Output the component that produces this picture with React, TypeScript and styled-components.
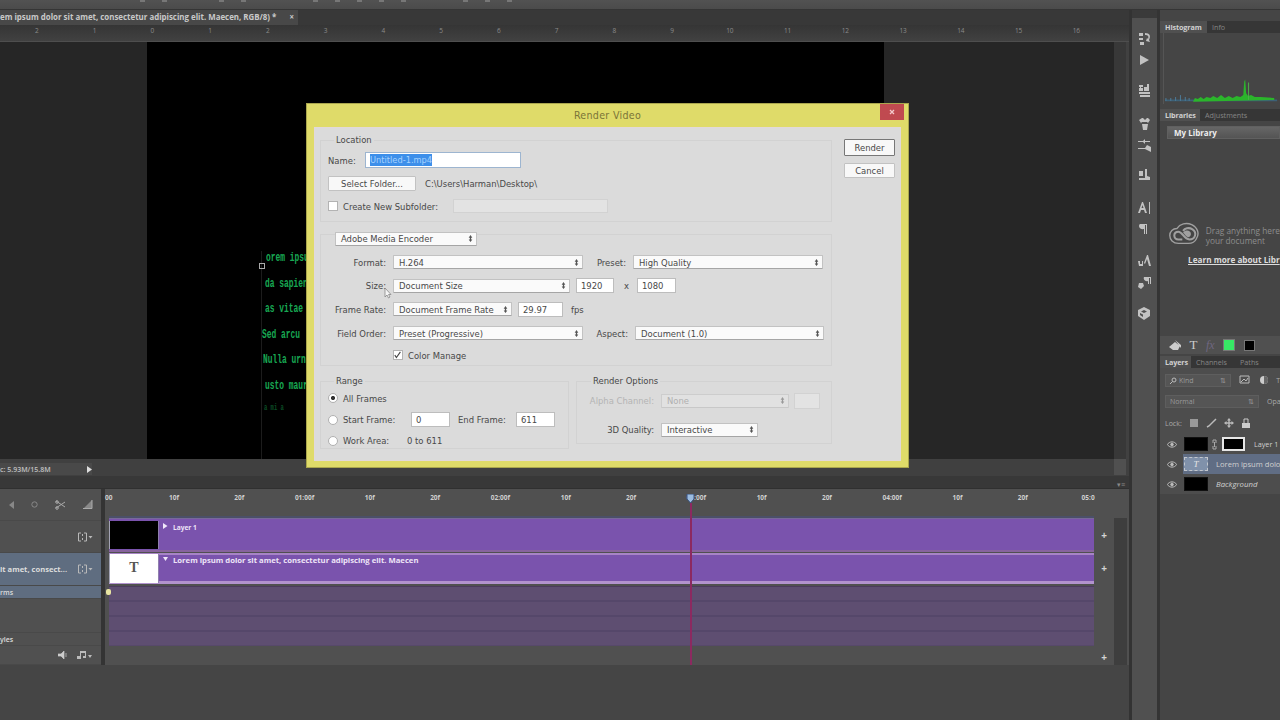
import React from 'react';
import styled, { createGlobalStyle } from 'styled-components';

const Global = createGlobalStyle`
  *{box-sizing:border-box}
  body{margin:0;background:#454545;overflow:hidden;font-family:"Open Sans","Noto Sans",sans-serif}
`;

const Screen = styled.div`
  position:relative;width:1280px;height:720px;overflow:hidden;display:flex;flex-direction:column;
  background:#454545;color:#c4c4c4;font-size:7px;
`;
const OptionsBar = styled.div`
  height:10px;flex:none;background:linear-gradient(#525252,#4b4b4b);border-bottom:1px solid #353535;
  display:flex;gap:17px;padding-left:140px;overflow:hidden;
`;
const OptionMark = styled.i<{ $gap?: number }>`
  width:5px;height:2px;background:#777;margin-left:${p => p.$gap ?? 0}px;
`;
const Body = styled.div`flex:1;display:flex;min-height:0;`;
const Main = styled.div`width:1130px;display:flex;flex-direction:column;`;
const TabRow = styled.div`height:15px;flex:none;background:#383838;display:flex;`;
const DocTab = styled.div`
  width:298px;height:15px;background:#484848;display:flex;align-items:center;overflow:hidden;
  color:#c8c8c8;font-size:7.9px;font-weight:700;white-space:nowrap;justify-content:space-between;padding-right:4px;line-height:15px;
`;
const Ruler = styled.div`
  height:17px;flex:none;background:linear-gradient(#353535,#414141);border-bottom:1px solid #4e4e4e;display:flex;
  padding-left:8px;overflow:hidden;
`;
const RulerMark = styled.span`
  width:57.75px;flex:none;text-align:center;color:#8b8b8b;font-size:6.5px;line-height:12px;
`;
const Workspace = styled.div`height:417px;flex:none;display:flex;background:#262626;padding-left:147px;`;
const Artboard = styled.div`width:737px;height:417px;background:#000;padding:209px 0 0 114px;`;
const TextLayer = styled.div`
  width:200px;height:208px;border-left:1px solid #1c1c1c;position:relative;
  font-family:"Liberation Mono",monospace;font-size:13px;color:#18a853;font-weight:bold;
`;
const Handle = styled.i`position:absolute;left:-3px;top:12px;width:6px;height:6px;border:1px solid #aaa;`;
const GreenLine = styled.div<{ $x: number; $cut?: boolean }>`
  height:${p => (p.$cut ? 10 : 25.6)}px;line-height:14px;margin-left:${p => p.$x}px;white-space:nowrap;
  transform:scaleX(.61);transform-origin:left;
  ${p => p.$cut && 'opacity:.45;font-size:9px;line-height:7px;'}
`;
const ScrollTrack = styled.div`margin-left:auto;width:16px;background:#383838;border-right:4px solid #414141;`;
const StatusBar = styled.div`
  height:17px;flex:none;background:#404040;display:flex;align-items:center;padding-bottom:1px;color:#c0c0c0;font-weight:600;
  justify-content:space-between;
`;
const StatusInfo = styled.div`width:92px;display:flex;justify-content:space-between;align-items:center;height:12px;background:#494949;margin-top:4px;`;
const Corner = styled.div`width:16px;height:16px;background:#505050;border-right:4px solid #404040;`;
const TimelineTabs = styled.div`height:13px;flex:none;background:#383838;border-bottom:1px solid #303030;display:flex;justify-content:flex-end;align-items:center;padding:4px 5px 0 0;color:#888;`;
const Timeline = styled.div`height:176px;flex:none;display:flex;background:#505050;`;
const TrackHeads = styled.div`width:101px;display:flex;flex-direction:column;color:#ddd;font-weight:600;`;
const Head = styled.div<{ $h: number; $on?: boolean; $end?: boolean; $gap?: number }>`
  height:${p => p.$h}px;flex:none;display:flex;align-items:center;white-space:nowrap;overflow:hidden;
  background:${p => (p.$on ? '#5f6d80' : '#505050')};border-bottom:1px solid #494949;
  justify-content:${p => (p.$end ? 'flex-end' : 'space-between')};gap:${p => p.$gap ?? 0}px;padding-right:8px;
`;
const HeadText = styled.span`font-size:7.6px;font-weight:700;`;
const Tracks = styled.div`
  width:993px;position:relative;border-left:4px solid #343434;padding-left:4px;display:flex;flex-direction:column;
`;
const TimeRuler = styled.div`height:27px;margin-left:-33px;display:flex;width:1030px;`;
const TimeMark = styled.span`
  width:65.3px;flex:none;text-align:center;line-height:17px;height:27px;color:#cfcfcf;font-size:6.5px;font-weight:700;
`;
const CacheBar = styled.div`height:2px;background:#4b5068;`;
const Clip = styled.div<{ $sel?: boolean }>`
  height:${p => (p.$sel ? 31 : 34)}px;flex:none;margin-bottom:1px;display:flex;align-items:stretch;background:#7a53ad;
  border-top:${p => (p.$sel ? '2px solid #a784c6' : '1px solid #77699a')};
  border-bottom:${p => (p.$sel ? '3px solid #b293ce' : '2px solid #87639d')};color:#eee4f8;font-weight:700;line-height:9px;
`;
const Thumb = styled.div<{ $light?: boolean }>`
  width:50px;flex:none;margin:${p => (p.$light ? '-1px 0 -2px' : '2px 0 1px')};border-left:1px solid #a3a3b4;border-right:1px solid #8f7fae;
  background:${p => (p.$light ? '#fff' : '#000')};color:#555;text-align:center;font:bold 14px/28px "Liberation Serif",serif;
`;
const ClipName = styled.div<{ $wide?: boolean }>`padding:${p => (p.$wide ? 1 : 4)}px 0 0 4px;display:flex;gap:5px;height:14px;font-size:${p => (p.$wide ? 7.7 : 6.6)}px;white-space:nowrap;`;
const PropertyLanes = styled.div`
  height:60px;flex:none;margin-top:1px;
  background:repeating-linear-gradient(#5e4e71 0 13px,#55476a 13px 15px);
  border-top:1px solid #4b3b5d;border-bottom:1px solid #57496a;
`;
const Playhead = styled.div`
  position:absolute;left:581px;top:5px;width:9px;height:171px;display:flex;flex-direction:column;align-items:center;
`;
const PlayLine = styled.i`width:2px;flex:1;background:#8c2960;`;
const KeyDot = styled.i`position:absolute;left:1px;top:100px;width:5px;height:6px;border-radius:2px;background:#e9e6a2;`;
const AddColumn = styled.div`
  width:20px;height:176px;display:flex;flex-direction:column;align-items:center;color:#d4d4d4;
  font-size:10px;font-weight:bold;line-height:10px;padding-top:41px;
`;
const Add = styled.span<{ $mt?: number }>`margin-top:${p => p.$mt ?? 0}px;`;
const TimelineScroll = styled.div`width:13px;margin-top:29px;background:#3e3e3e;`;
const Gutter = styled.div`width:3px;background:#333;margin-left:-1px;`;
const IconStrip = styled.div`
  width:25px;background:#505050;display:flex;flex-direction:column;align-items:center;padding-top:13px;border-top:8px solid #3a3a3a;
`;
const StripIcon = styled.div<{ $h: number }>`
  height:${p => p.$h}px;width:16px;flex:none;display:flex;align-items:flex-start;justify-content:center;
`;
const Panels = styled.div`flex:1;min-width:0;border-left:3px solid #343434;background:#454545;padding-top:11px;display:flex;flex-direction:column;overflow:hidden;white-space:nowrap;`;
const PanelTabs = styled.div<{ $mt?: number }>`height:12px;margin-top:${p => p.$mt ?? 0}px;flex:none;background:#363636;display:flex;font-size:7.2px;align-items:stretch;line-height:12px;`;
const PanelTab = styled.span<{ $on?: boolean; $w: number }>`
  width:${p => p.$w}px;padding-left:5px;background:${p => (p.$on ? '#505050' : 'transparent')};color:${p => (p.$on ? '#d0d0d0' : '#858585')};
  font-weight:${p => (p.$on ? 700 : 400)};flex:none;${p => p.$on && 'letter-spacing:-.1px;'}
`;
const HistogramBox = styled.div`height:71px;flex:none;border-left:1px solid #555;margin-left:3px;display:flex;align-items:flex-end;overflow:hidden;`;
const LibrarySelect = styled.div`
  margin:5px 0 0 7px;height:13px;flex:none;background:linear-gradient(#666,#545454);border:1px solid #606060;color:#eee;font-size:8px;font-weight:bold;line-height:11px;padding-left:6px;
`;
const LibraryHint = styled.div`height:36px;margin-top:81px;padding-left:9px;display:flex;gap:7px;flex:none;color:#8d8d8d;font-size:8.3px;line-height:10px;`;
const HintText = styled.div`padding-top:6px;`;
const LearnMore = styled.div`margin:-2px 0 0 28px;height:15px;flex:none;font-size:8.2px;font-weight:bold;text-decoration:underline;color:#dcdcdc;`;
const SwatchRow = styled.div`height:18px;margin-top:67px;flex:none;background:#505050;display:flex;align-items:center;gap:8.500px;padding-left:9px;color:#ccc;font:13px "Liberation Serif",serif;`;
const FxMark = styled.i`color:#6f6780;font-size:12px;`;
const Swatch = styled.i<{ $c: string; $s: number }>`width:${p => p.$s}px;height:${p => p.$s}px;background:${p => p.$c};border:1px solid #777;`;
const LayerPanel = styled.div`background:#4d4d4d;height:126px;flex:none;padding-top:2px;`;
const LayerTools = styled.div<{ $h: number; $gap?: number }>`height:${p => p.$h}px;display:flex;align-items:center;gap:${p => p.$gap ?? 8}px;padding-left:5px;color:#aaa;`;
const Field = styled.div<{ $w: number }>`width:${p => p.$w}px;flex:none;height:13px;background:#555;border:1px solid #5e5e5e;line-height:11px;padding:0 4px;display:flex;justify-content:space-between;align-items:center;color:#9a9a9a;`;
const FieldText = styled.span`display:flex;gap:2px;align-items:center;`;
const Layer = styled.div<{ $on?: boolean }>`
  height:20px;display:flex;align-items:center;color:#d0d0d0;font-size:7.2px;
  background:${p => (p.$on ? 'linear-gradient(90deg,#4d4d4d 23px,#606d84 23px)' : '#4d4d4d')};
`;
const EyeCell = styled.span`width:17px;padding-left:7px;display:flex;flex:none;`;
const LayerThumb = styled.i<{ $photo?: boolean }>`
  width:24px;flex:none;height:14px;margin:0 4px 0 7px;background:${p => (p.$photo ? '#8091aa' : '#000')};border:1px ${p => (p.$photo ? 'dashed #c2c6cc' : 'solid #111')};
  color:#e7e7e7;font:italic 9px/12px "Liberation Serif",serif;text-align:center;
`;
const MaskThumb = styled.i`width:23px;flex:none;height:14px;background:#000;border:2px solid #e6e6e6;margin:0 9px 0 5px;`;
const LayerName = styled.span`padding-left:4px;font-size:7.6px;`;
const BackgroundName = styled.i`padding-left:4px;font-size:7.8px;`;

const Dialog = styled.div`
  position:absolute;left:306px;top:103px;width:603px;height:365px;background:#dfdb69;border:1px solid #aaa64e;padding:0 7px 6px;
  font-family:"DejaVu Sans Condensed","DejaVu Sans",sans-serif;font-size:9.4px;color:#484848;
`;
const TitleBar = styled.div`height:23px;text-align:center;line-height:22px;font-size:10.6px;letter-spacing:.3px;color:#7a7538;`;
const CloseButton = styled.div`
  position:absolute;right:4px;top:0;width:24px;height:16px;background:#c04a50;display:flex;align-items:center;justify-content:center;
`;
const DialogBody = styled.div`height:334px;background:#dbdbdb;display:flex;border:1px solid #e2d9d9;padding-left:5px;`;
const Form = styled.div`width:512px;padding-top:6px;flex:none;`;
const Group = styled.fieldset<{ $h: number; $w?: number; $mt?: number }>`
  margin:${p => p.$mt ?? 0}px 0 0;padding:0;min-width:0;height:${p => p.$h}px;width:${p => p.$w ?? 512}px;border:1px solid #d2d2d2;
`;
const Legend = styled.legend<{ $ml?: number }>`margin-left:${p => p.$ml ?? 13}px;padding:0 2px;height:12px;line-height:12px;`;
const Row = styled.div<{ $h: number; $pl?: number; $mt?: number }>`
  height:${p => p.$h}px;padding-left:${p => p.$pl ?? 7}px;margin-top:${p => p.$mt ?? 0}px;display:flex;align-items:center;white-space:nowrap;line-height:11px;
`;
const Label = styled.span<{ $w: number; $right?: boolean; $off?: boolean }>`
  width:${p => p.$w}px;flex:none;${p => p.$right && 'text-align:right;padding-right:7px;'}${p => p.$off && 'color:#b4b4b4;'}
`;
const Input = styled.div<{ $w: number; $h?: number; $off?: boolean; $mr?: number; $focus?: boolean }>`
  width:${p => p.$w}px;height:${p => p.$h ?? 16}px;flex:none;margin-right:${p => p.$mr ?? 0}px;padding:0 4px;display:flex;align-items:center;
  background:${p => (p.$off ? '#e3e3e3' : '#fff')};border:1px solid ${p => (p.$off ? '#d2d2d2' : p.$focus ? '#9db5d0' : '#bdbdbd')};
`;
const Selected = styled.span`background:#3d8fea;color:#a5d2ff;line-height:12px;height:12px;white-space:nowrap;font-size:9.2px;`;
const Button = styled.div<{ $w: number; $primary?: boolean; $mr?: number }>`
  width:${p => p.$w}px;height:${p => (p.$primary ? 17 : 15)}px;flex:none;margin-right:${p => p.$mr ?? 0}px;background:#f8f8f8;
  border:1px solid ${p => (p.$primary ? '#777' : '#c2c2c2')};border-radius:1px;display:flex;align-items:center;justify-content:center;
`;
const SelectBox = styled.div<{ $w: number; $mr?: number; $off?: boolean }>`
  width:${p => p.$w}px;height:14px;flex:none;margin-right:${p => p.$mr ?? 0}px;padding:0 3px 0 5px;display:flex;justify-content:space-between;align-items:center;
  background:${p => (p.$off ? '#e1e1e1' : '#fafafa')};color:${p => (p.$off ? '#b0b0b0' : 'inherit')};
  border:1px solid ${p => (p.$off ? '#cdcdcd' : '#c2c2c2')};border-bottom-color:${p => (p.$off ? '#c8c8c8' : '#a5a5a5')};border-radius:1px;
`;
const Check = styled.span`width:10px;height:10px;flex:none;background:#fff;border:1px solid #b3b3b3;margin-right:5px;display:flex;`;
const Radio = styled.span<{ $on?: boolean }>`
  width:10px;height:10px;flex:none;border-radius:5px;border:1px solid #b0b0b0;margin-right:5px;
  background:${p => (p.$on ? 'radial-gradient(circle,#333 0 1.7px,#fff 2.4px)' : '#fff')};
`;
const Columns = styled.div`display:flex;gap:7px;margin-top:9px;`;
const Actions = styled.div`margin-left:12px;padding-top:11px;display:flex;flex-direction:column;gap:7px;`;
const Cursor = styled.svg`position:absolute;left:384px;top:287px;`;

function Select({ w, mr, off, children }: { w: number; mr?: number; off?: boolean; children: React.ReactNode }) {
  return (
    <SelectBox $w={w} $mr={mr} $off={off}>
      <span>{children}</span>
      <svg width="5" height="7" viewBox="0 0 5 8" fill={off ? '#999' : '#555'}><path d="M2.5 0 4.600 3H3.200v2h1.400L2.500 8 .4 5h1.400V3H.4Z" /></svg>
    </SelectBox>
  );
}

const stripIcons: [number, React.ReactNode][] = [
  [21, <path key="a" d="M2 2h4v3H2zM2 7h4v2H2zM3 11h4v3H3zM8 2c5 0 6 3 4 7l1 2-4-1 1-3 1 1c1-3 0-4-3-4z" />],
  [31, <path key="b" d="M3 3l9 5-9 5z" />],
  [33, <path key="c" d="M2 2h4v2H4v1h2v3H2V5h1V4H2zM7 4h3V1h2v7H7zM2 9h11v2H2zM3 12h10v2H3z" />],
  [22, <path key="d" d="M2 4l3-2h1l2 2 2-2h1l2 2-2 3-1-1-5 0-1 1zM5 8h6l-1 6H6z" />],
  [30, <path key="e" d="M1 3h5l2-2v2h5v1H8v2L6 4H1zM1 10h7l2-3 4 2v5l-4-2-2-1H1z" />],
  [32, <path key="f" d="M2 3h4v5H2zM8 1h2v7l3 1v3H2v-2h6z" />],
  [21, <path key="g" d="M5 2h1l4 11H8L7 10H4l-1 3H1zM5.500 5L4.500 8h2zM12 2h1v12h-1z" />],
  [32, <path key="h" d="M3 3h7v10H9V4H8v9H7V8C2 9 1 4 3 3z" />],
  [22, <path key="i" d="M1 8h2v3h2V8h1v5H2zM7 10l3-8h1l3 11h-2l-2-7-2 5z" />],
  [31, <path key="j" d="M7 2h7v7h-1V3h-1v6h-1V6C8 7 6 4 7 2zM2 8h4l1 3-3 3-3-2z" />],
  [30, <path key="k" d="M7 1l6 3v6l-6 4-6-4V4zm0 3L4 5.500 7 7l3-1.500zM3 7v2l3 2V8.500z" />],
];

const times = ['00', '10f', '20f', '01:00f', '10f', '20f', '02:00f', '10f', '20f', '03:00f', '10f', '20f', '04:00f', '10f', '20f', '05:0'];
const lines: [string, number][] = [['orem ipsum', 4], ['da sapien', 3], ['as vitae', 3], ['Sed arcu', 0], ['Nulla urna', 1], ['usto mauris', 3]];

const Eye = () => (
  <svg width="10" height="9" viewBox="0 0 10 9" fill="none" stroke="#bcbcbc"><path d="M.5 4.500C2 1 8 1 9.500 4.500 8 8 2 8 .5 4.500" /><circle cx="5" cy="4.500" r="1.300" fill="#bcbcbc" /></svg>
);
const FrameMenu = () => (
  <svg width="16" height="10" viewBox="0 0 16 10" fill="none" stroke="#b9b9b9"><path d="M4 1H1.500v8H4M7 1h2.500v8H7M5.500 2v2M5.500 6v2" /><path d="M11.500 4h4l-2 2.500z" fill="#b9b9b9" stroke="none" /></svg>
);
const ClipTitle = ({ open, children }: { open?: boolean; children: React.ReactNode }) => (
  <ClipName $wide={open}>
    <svg width="5" height="6" viewBox="0 0 5 6" fill="#f0e8fa"><path d={open ? 'M0 1h5L2.500 5z' : 'M0 0l4.500 3L0 6z'} /></svg>
    <span>{children}</span>
  </ClipName>
);

export default function App() {
  return (
    <Screen>
      <Global />
      <OptionsBar>
        <OptionMark /><OptionMark /><OptionMark $gap={35} /><OptionMark /><OptionMark $gap={50} /><OptionMark /><OptionMark /><OptionMark /><OptionMark /><OptionMark $gap={40} /><OptionMark /><OptionMark />
      </OptionsBar>
      <Body>
        <Main>
          <TabRow><DocTab><span>em ipsum dolor sit amet, consectetur adipiscing elit. Maecen, RGB/8) *</span><span>×</span></DocTab></TabRow>
          <Ruler>{['2', '1', '0', '1', '2', '3', '4', '5', '6', '7', '8', '9', '10', '11', '12', '13', '14', '15', '16'].map((n, i) => <RulerMark key={i}>{n}</RulerMark>)}</Ruler>
          <Workspace>
            <Artboard>
              <TextLayer>
                <Handle />
                {lines.map(([t, x]) => <GreenLine key={t} $x={x}>{t}</GreenLine>)}
                <GreenLine $x={2} $cut>a mi a</GreenLine>
              </TextLayer>
            </Artboard>
            <ScrollTrack />
          </Workspace>
          <StatusBar>
            <StatusInfo><span>c: 5.93M/15.8M</span><svg width="5" height="7" fill="#ddd"><path d="M0 0l5 3.500L0 7z" /></svg></StatusInfo>
            <Corner />
          </StatusBar>
          <TimelineTabs>▾≡</TimelineTabs>
          <Timeline>
            <TrackHeads>
              <Head $h={32} $end $gap={16}>
                <svg width="6" height="8" fill="#888"><path d="M6 0v8L1 4z" /></svg>
                <svg width="9" height="9" fill="none" stroke="#888"><circle cx="4.500" cy="4.500" r="2.700" /></svg>
                <svg width="12" height="10" fill="none" stroke="#aaa"><path d="M1 1l9 6M1 8l9-6" /><circle cx="2" cy="8" r="1.300" /><circle cx="2" cy="2" r="1.300" /></svg>
                <svg width="10" height="9"><path d="M9 0v9H0z" fill="#888" /><path d="M9 0v8.500H0" fill="none" stroke="#aaa" /></svg>
              </Head>
              <Head $h={32} $end><FrameMenu /></Head>
              <Head $h={33} $on><HeadText>it amet, consect...</HeadText><FrameMenu /></Head>
              <Head $h={13} $on><span>rms</span></Head>
              <Head $h={34} />
              <Head $h={13}><span>yles</span></Head>
              <Head $h={19} $end $gap={9}>
                <svg width="9" height="8" fill="#ccc"><path d="M0 3h3l3-3v8L3 5H0zM8 2v4" stroke="#ccc" strokeWidth=".7" /></svg>
                <svg width="17" height="10" fill="#bbb"><path d="M4 1h6v7H7V6h2V3H5v6H1V6h3zM12 5h4l-2 3z" /></svg>
              </Head>
            </TrackHeads>
            <Tracks>
              <TimeRuler>{times.map((t, i) => <TimeMark key={i}>{t}</TimeMark>)}</TimeRuler>
              <CacheBar />
              <Clip><Thumb /><ClipTitle>Layer 1</ClipTitle></Clip>
              <Clip $sel><Thumb $light>T</Thumb><ClipTitle open>Lorem ipsum dolor sit amet, consectetur adipiscing elit. Maecen</ClipTitle></Clip>
              <PropertyLanes />
              <KeyDot />
              <Playhead>
                <svg width="9" height="9"><path d="M1 0h7v5L4.500 9 1 5z" fill="#9bbce0" stroke="#38507c" /></svg>
                <PlayLine />
              </Playhead>
            </Tracks>
            <AddColumn><Add>+</Add><Add $mt={23}>+</Add><Add $mt={79}>+</Add></AddColumn>
            <TimelineScroll />
          </Timeline>
        </Main>
        <Gutter />
        <IconStrip>
          {stripIcons.map(([h, icon], i) => <StripIcon key={i} $h={h}><svg width="16" height="16" viewBox="0 0 16 16" fill="#c2c2c2">{icon}</svg></StripIcon>)}
        </IconStrip>
        <Panels>
          <PanelTabs><PanelTab $on $w={47}>Histogram</PanelTab><PanelTab $w={40}>Info</PanelTab></PanelTabs>
          <HistogramBox>
            <svg width="120" height="71" viewBox="0 0 120 71" fill="none">
              <path d="M1 68.500h116" stroke="#3d6177" strokeWidth="2" />
              <path d="M2 69v-3M7 69v-3M12 69v-4M17 69v-6M22 69v-4M26 69v-3" stroke="#4e7c9c" />
              <path d="M30 70l2-4 3 1 3-2 3 2 3-2 4 1 3-2 4 2 4-3 4 3 4-2 4 2 4-2 4 1 3-2 1-14 1-2 1 14 2 3 3-1 4 2 6 0 14 1v2z" fill="#2bb52b" />
              <path d="M87.500 68V50" stroke="#4fae4b" />
            </svg>
          </HistogramBox>
          <PanelTabs $mt={5}><PanelTab $on $w={40}>Libraries</PanelTab><PanelTab $w={60}>Adjustments</PanelTab></PanelTabs>
          <LibrarySelect>My Library</LibrarySelect>
          <LibraryHint>
            <svg width="38" height="28" viewBox="0 0 38 28" fill="none" stroke="#a0a0a0">
              <path d="M10 7C14 1 22-1 29 2c8 4 10 12 6 18-2 4-6 6-10 6H12C5 26 1 21 1 16S5 7 10 7z" strokeWidth="1.800" />
              <path d="M17 21h-5c-7 0-7-10 0-10 5 0 7 9 14 10 8 0 10-9 4-13-5-3-10-1-12 2" strokeWidth="2.600" />
              <path d="M18 12c3-4 10-3 10 2 0 4-4 5-6 3z" fill="#a0a0a0" stroke="none" />
            </svg>
            <HintText>Drag anything here<br />your document</HintText>
          </LibraryHint>
          <LearnMore>Learn more about Libr</LearnMore>
          <SwatchRow>
            <svg width="12" height="10" fill="#ccc"><path d="M0 7l6-5 5 4-2 4H4zM6 0l6 5v3z" /></svg>T<FxMark>fx</FxMark><Swatch $c="#37e865" $s={12} /><Swatch $c="#000" $s={11} />
          </SwatchRow>
          <PanelTabs $mt={2}><PanelTab $on $w={31}>Layers</PanelTab><PanelTab $w={44}>Channels</PanelTab><PanelTab $w={30}>Paths</PanelTab></PanelTabs>
          <LayerPanel>
            <LayerTools $h={20}><Field $w={66}><FieldText><svg width="7" height="7" fill="none" stroke="#bbb"><circle cx="4" cy="3" r="2" /><path d="M2.500 4.500L0 7" /></svg>Kind</FieldText><span>⇅</span></Field>
              <svg width="12" height="10" fill="none" stroke="#bbb"><path d="M1 1h9v7H1zM2 7l3-3 2 2 2-3" /></svg>
              <svg width="10" height="10"><circle cx="5" cy="5" r="4" fill="#ccc" /><path d="M5 1a4 4 0 010 8z" fill="#666" /></svg><span>T</span>
            </LayerTools>
            <LayerTools $h={22}><Field $w={94}><span>Normal</span><span>⇅</span></Field><span>Opa</span></LayerTools>
            <LayerTools $h={22} $gap={7}><span>Lock:</span>
              <svg width="10" height="10" fill="#999"><path d="M1 1h8v8H1z" /></svg>
              <svg width="11" height="10" fill="none" stroke="#bbb" strokeWidth="1.500"><path d="M1 9l2-1 7-7" /></svg>
              <svg width="10" height="10" fill="#bbb"><path d="M5 0l2 2.500H5.700V4.300H7.500V3L10 5 7.500 7V5.700H5.700V7.500H7L5 10 3 7.500h1.300V5.700H2.500V7L0 5l2.500-2v1.300h1.800V2.500H3z" /></svg>
              <svg width="10" height="10"><path d="M1 5h8v5H1z" fill="#ccc" /><path d="M3 5V1h4v4" stroke="#ccc" fill="none" /></svg>
            </LayerTools>
            <Layer><EyeCell><Eye /></EyeCell><LayerThumb /><svg width="5" height="11" fill="none" stroke="#aaa"><path d="M1 4V1h3v3M1 7v3h3V7M2.500 3v5" /></svg><MaskThumb /><span>Layer 1</span></Layer>
            <Layer $on><EyeCell><Eye /></EyeCell><LayerThumb $photo>T</LayerThumb><LayerName>Lorem ipsum dolo</LayerName></Layer>
            <Layer><EyeCell><Eye /></EyeCell><LayerThumb /><BackgroundName>Background</BackgroundName></Layer>
          </LayerPanel>
        </Panels>
      </Body>

      <Dialog>
        <TitleBar>Render Video</TitleBar>
        <CloseButton><svg width="6" height="6" stroke="#f3c9cb" strokeWidth="1.300"><path d="M1 1l4 4M5 1L1 5" /></svg></CloseButton>
        <DialogBody>
          <Form>
            <Group $h={88}>
              <Legend>Location</Legend>
              <Row $h={24} $mt={2}><Label $w={37}>Name:</Label><Input $w={156} $focus><Selected>Untitled-1.mp4</Selected></Input></Row>
              <Row $h={23}><Button $w={88} $mr={9}>Select Folder...</Button><Label $w={130}>C:\Users\Harman\Desktop\</Label></Row>
              <Row $h={22}><Check /><Label $w={110}>Create New Subfolder:</Label><Input $w={155} $h={14} $off /></Row>
            </Group>
            <Group $h={132} $mt={12}>
              <Row $h={15} $pl={14} $mt={-4}><Select w={142}>Adobe Media Encoder</Select></Row>
              <Row $h={24} $mt={4} $pl={0}><Label $w={72} $right>Format:</Label><Select w={190} mr={8}>H.264</Select><Label $w={42} $right>Preset:</Label><Select w={190}>High Quality</Select></Row>
              <Row $h={23} $pl={0}><Label $w={72} $right>Size:</Label><Select w={177} mr={6}>Document Size</Select><Input $w={38} $h={15} $mr={10}>1920</Input><Label $w={13}>x</Label><Input $w={39} $h={15}>1080</Input></Row>
              <Row $h={24} $pl={0}><Label $w={72} $right>Frame Rate:</Label><Select w={119} mr={6}>Document Frame Rate</Select><Input $w={45} $h={15} $mr={8}>29.97</Input><Label $w={20}>fps</Label></Row>
              <Row $h={24} $pl={0}><Label $w={72} $right>Field Order:</Label><Select w={190} mr={8}>Preset (Progressive)</Select><Label $w={44} $right>Aspect:</Label><Select w={189}>Document (1.0)</Select></Row>
              <Row $h={20} $pl={72}><Check><svg width="10" height="9" viewBox="0 0 10 9" fill="none" stroke="#444" strokeWidth="1.400"><path d="M1 4l2 3 5-7" /></svg></Check><Label $w={70}>Color Manage</Label></Row>
            </Group>
            <Columns>
              <Group $w={249} $h={74}>
                <Legend>Range</Legend>
                <Row $h={22}><Radio $on /><Label $w={70}>All Frames</Label></Row>
                <Row $h={21}><Radio /><Label $w={68}>Start Frame:</Label><Input $w={39} $h={15} $mr={8}>0</Input><Label $w={58}>End Frame:</Label><Input $w={39} $h={15}>611</Input></Row>
                <Row $h={21}><Radio /><Label $w={64}>Work Area:</Label><Label $w={60}>0 to 611</Label></Row>
              </Group>
              <Group $w={256} $h={69}>
                <Legend $ml={14}>Render Options</Legend>
                <Row $h={27} $pl={0}><Label $w={84} $right $off>Alpha Channel:</Label><Select w={128} mr={5} off>None</Select><Input $w={26} $off /></Row>
                <Row $h={31} $pl={0}><Label $w={84} $right>3D Quality:</Label><Select w={97}>Interactive</Select></Row>
              </Group>
            </Columns>
          </Form>
          <Actions><Button $w={51} $primary>Render</Button><Button $w={51}>Cancel</Button></Actions>
        </DialogBody>
      </Dialog>
      <Cursor width="8" height="12" viewBox="0 0 8 12"><path d="M1 1v9l2-2 1.500 3 1.500-1-1.500-2.500H7z" fill="#f5f5f5" stroke="#888" strokeWidth=".8" /></Cursor>
    </Screen>
  );
}
